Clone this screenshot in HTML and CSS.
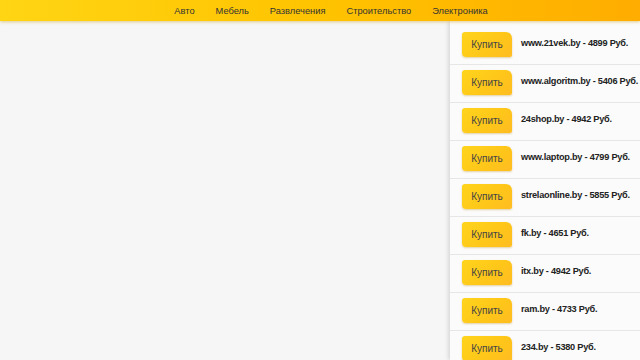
FILE: index.html
```html
<!DOCTYPE html>
<html lang="ru">
<head>
  <meta charset="UTF-8">
  <title>Цены</title>
  <link rel="stylesheet" href="styles.css">
</head>
<body>

<div class="top-menu">
  <a href="#">Авто</a>
  <a href="#">Мебель</a>
  <a href="#">Развлечения</a>
  <a href="#">Строительство</a>
  <a href="#">Электроника</a>
</div>

<div class="page">
  <div class="content"></div>
  <div class="shops">
    <div class="shop"><button class="buy">Купить</button><span class="price">www.21vek.by - 4899 Руб.</span></div>
    <div class="shop"><button class="buy">Купить</button><span class="price">www.algoritm.by - 5406 Руб.</span></div>
    <div class="shop"><button class="buy">Купить</button><span class="price">24shop.by - 4942 Руб.</span></div>
    <div class="shop"><button class="buy">Купить</button><span class="price">www.laptop.by - 4799 Руб.</span></div>
    <div class="shop"><button class="buy">Купить</button><span class="price">strelaonline.by - 5855 Руб.</span></div>
    <div class="shop"><button class="buy">Купить</button><span class="price">fk.by - 4651 Руб.</span></div>
    <div class="shop"><button class="buy">Купить</button><span class="price">itx.by - 4942 Руб.</span></div>
    <div class="shop"><button class="buy">Купить</button><span class="price">ram.by - 4733 Руб.</span></div>
    <div class="shop"><button class="buy">Купить</button><span class="price">234.by - 5380 Руб.</span></div>
  </div>
</div>

</body>
</html>
```

FILE: styles.css
```css
body {
  margin: 0;
  font-family: "Liberation Sans", Arial, sans-serif;
  background: #f6f6f6;
  overflow: hidden;
}
.top-menu {
  height: 21px;
  display: flex;
  justify-content: center;
  align-items: center;
  padding-left: 22px;
  background: linear-gradient(to right, #ffd514, #ffc300 50%, #ffad00);
  box-shadow: 0 1px 3px rgba(200, 150, 0, 0.45);
  position: relative;
  z-index: 2;
}
.top-menu a {
  color: #333;
  text-decoration: none;
  font-size: 9.3px;
  padding: 0 10.5px;
}
.page {
  display: flex;
  height: 339px;
}
.content {
  flex: 1;
}
.shops {
  width: 190px;
  background: #fbfbfb;
  box-shadow: -2px 0 4px rgba(0, 0, 0, 0.12);
  padding-top: 6px;
}
.shop {
  display: flex;
  align-items: flex-start;
  height: 38px;
  padding-top: 5px;
  box-sizing: border-box;
  border-bottom: 1px solid #e6e6e6;
}
.buy {
  flex-shrink: 0;
  width: 50px;
  height: 25px;
  margin-left: 12px;
  border: none;
  border-radius: 3px 6px 2px 4px;
  background: linear-gradient(135deg, #ffd41c, #ffc619 60%, #ffbc22);
  box-shadow: 0 1px 2px rgba(180, 130, 0, 0.35);
  color: #444;
  font-family: inherit;
  font-size: 10px;
  padding: 0;
  cursor: pointer;
}
.price {
  margin-left: 9px;
  padding-top: 6px;
  font-size: 9.2px;
  font-weight: bold;
  letter-spacing: -0.25px;
  color: #222;
  white-space: nowrap;
}
```
